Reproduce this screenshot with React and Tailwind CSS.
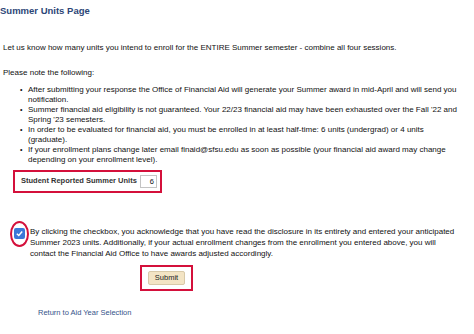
import React from "react";

const bullets = [
  [
    "After submitting your response the Office of Financial Aid will generate your Summer award in mid-April and will send you",
    "notification.",
  ],
  [
    "Summer financial aid eligibility is not guaranteed. Your 22/23 financial aid may have been exhausted over the Fall '22 and",
    "Spring '23 semesters.",
  ],
  [
    "In order to be evaluated for financial aid, you must be enrolled in at least half-time: 6 units (undergrad) or 4 units",
    "(graduate).",
  ],
  [
    "If your enrollment plans change later email finaid@sfsu.edu as soon as possible (your financial aid award may change",
    "depending on your enrollment level).",
  ],
];

const App = () => {
  return (
    <div
      className="w-[474px] h-[334px] overflow-hidden bg-white text-[#111]"
      style={{ fontFamily: '"Liberation Sans", Arial, sans-serif' }}
    >
      {/* header */}
      <h1 className="text-[9.5px] font-bold text-[#2c4677] leading-none pt-[6px]">
        Summer Units Page
      </h1>

      <p className="text-[8px] leading-[10px] mt-[27px] ml-[3px]">
        Let us know how many units you intend to enroll for the ENTIRE Summer semester - combine all four sessions.
      </p>

      <p className="text-[8px] leading-[10px] mt-[15px] ml-[3px]">
        Please note the following:
      </p>

      <ul className="mt-[7px] ml-[20px] text-[8px] leading-[10px] flex flex-col">
        {bullets.map((b, i) => (
          <li key={i} className="flex">
            <span className="w-[8px] shrink-0 text-[7px]">•</span>
            <span className="whitespace-nowrap">
              {b[0]}
              <br />
              {b[1]}
            </span>
          </li>
        ))}
      </ul>

      {/* units box */}
      <div className="mt-[5px] ml-[13px] w-[149px] h-[23px] border-2 border-[#d4103b] flex items-center pl-[6px] gap-[3px]">
        <span className="text-[7.5px] font-bold text-[#333] whitespace-nowrap">Student Reported Summer Units</span>
        <span className="w-[17px] h-[13px] border border-[#c4c4c4] text-[7.5px] text-right pr-[2px] leading-[12px]">
          6
        </span>
      </div>

      {/* acknowledgement */}
      <div className="flex mt-[33px] ml-[10px]">
        <div className="w-[19px] h-[26px] shrink-0 rounded-[50%] border-2 border-[#d4103b] flex items-center justify-center -mt-[5px]">
          <span className="w-[11px] h-[11px] bg-[#3a78d8] rounded-[2px] flex items-center justify-center">
            <svg width="9" height="9" viewBox="0 0 10 10">
              <path d="M2 5.2 L4.2 7.3 L8 2.8" fill="none" stroke="white" strokeWidth="1.6" />
            </svg>
          </span>
        </div>
        <p className="text-[8px] leading-[11px] ml-[1px] whitespace-nowrap">
          By clicking the checkbox, you acknowledge that you have read the disclosure in its entirety and entered your anticipated
          <br />
          Summer 2023 units. Additionally, if your actual enrollment changes from the enrollment you entered above, you will
          <br />
          contact the Financial Aid Office to have awards adjusted accordingly.
        </p>
      </div>

      {/* submit */}
      <div className="mt-[6px] ml-[140px] w-[53px] h-[26px] border-2 border-[#d4103b] flex items-center justify-center">
        <button className="h-[14px] w-[37px] bg-[#f3e4c4] border border-[#d8c9a8] rounded-[2px] text-[7.5px] leading-none text-[#222]">
          Submit
        </button>
      </div>

      <a className="block mt-[16px] ml-[38px] text-[7.5px] text-[#35548a]">Return to Aid Year Selection</a>
    </div>
  );
};

export default App;
